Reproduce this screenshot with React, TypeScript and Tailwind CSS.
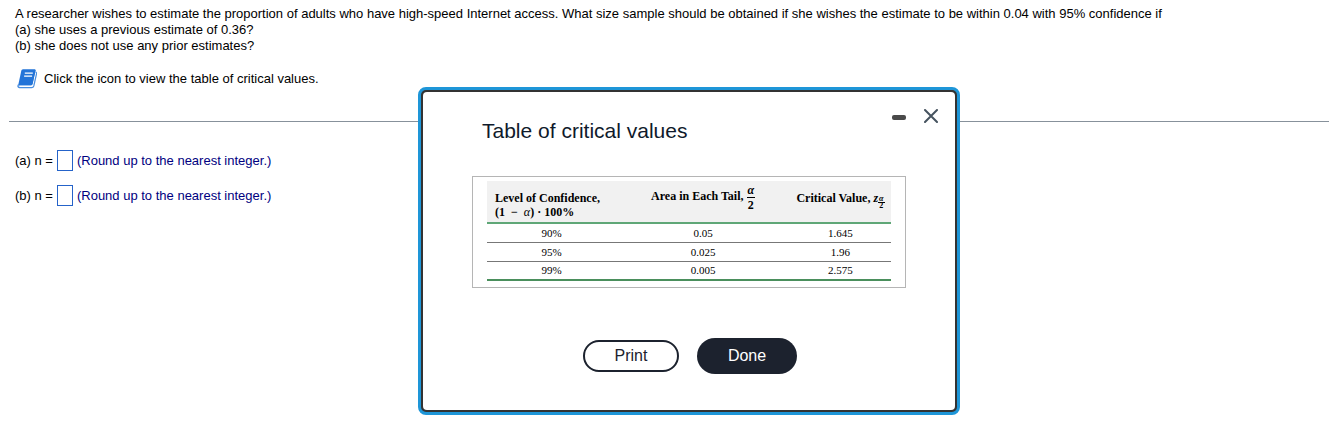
import type { ReactNode } from "react";

const parts = [
  { id: "part-a", label: "(a) n =" },
  { id: "part-b", label: "(b) n =" },
];

const criticalValues = [
  { level: "90%", tail: "0.05", z: "1.645" },
  { level: "95%", tail: "0.025", z: "1.96" },
  { level: "99%", tail: "0.005", z: "2.575" },
];

function BookIcon() {
  return (
    <svg viewBox="0 0 20 20" className="h-5 w-5" aria-hidden="true">
      <path
        d="M5.800.5h11.700c.8 0 1.300.5 1.100 1.200l-3 13.300c-.2.900-.8 1.300-1.600 1.300H2.500c-.8 0-1.300.4-1.300.9s.3.800.9.800"
        fill="#2374d8"
      />
      <path
        d="M4.300 1.800C4.500.9 5 .5 5.900.5h11.500c.7 0 1.100.4 1 1.100l-2.900 13.200c-.2.900-.8 1.400-1.600 1.400H1.200Z"
        fill="#2374d8"
      />
      <path
        d="M1.500 15.500c-1 1.700-.7 3.200.8 3.200h12.300c1.200 0 1.900-.6 2.200-1.700l2.700-12c.2-.9 0-1.500-.8-2"
        fill="none"
        stroke="#4a8fe0"
        strokeWidth="1.200"
      />
      <path d="M7.800 4.200h8M7.100 7.200h8" stroke="#fff" strokeWidth="1.300" />
    </svg>
  );
}

function Fraction({ top, bottom }: { top: ReactNode; bottom: ReactNode }) {
  return (
    <span className="inline-flex flex-col items-center align-middle">
      <span className="border-b border-black px-px italic">{top}</span>
      <span>{bottom}</span>
    </span>
  );
}

function CriticalValuesTable() {
  return (
    <div className="border border-[#b5b5b5] px-3.5 pt-1 pb-1.5">
      <table className="w-full table-fixed border-collapse font-['Liberation_Serif',serif] text-[11px] leading-4 text-black">
        <colgroup>
          <col className="w-[32%]" />
          <col className="w-[43%]" />
          <col className="w-[25%]" />
        </colgroup>
        <thead className="border-b-2 border-[#5fa777] bg-[#f1f1f1] text-[12px] leading-3.5">
          <tr className="h-[42px] align-top">
            <th className="pt-2.5 pl-2 text-left whitespace-nowrap">
              Level of Confidence,
              <br />
              (1 &nbsp;−&nbsp; <i className="font-normal">α</i>) · 100%
            </th>
            <th className="pt-0.5 whitespace-nowrap">
              Area in Each Tail, <Fraction top="α" bottom="2" />
            </th>
            <th className="pt-2.5 whitespace-nowrap">
              Critical Value, <i>z</i>
              <sub className="text-[8px] leading-1.5">
                <Fraction top="α" bottom="2" />
              </sub>
            </th>
          </tr>
        </thead>
        <tbody className="border-b-2 border-[#4a8f5c] text-center">
          {criticalValues.map((row) => (
            <tr key={row.level} className="h-[19px] border-t border-[#777] first:border-t-0">
              <td>{row.level}</td>
              <td>{row.tail}</td>
              <td>{row.z}</td>
            </tr>
          ))}
        </tbody>
      </table>
    </div>
  );
}

function CriticalValuesDialog() {
  return (
    <div
      role="dialog"
      aria-labelledby="dialog-title"
      className="absolute top-[87px] left-[418px] w-[542px] rounded-lg border-3 border-[#1e96d8] bg-[#333]"
    >
      <div className="m-0.5 rounded-sm bg-white px-[49px] pt-3.5 pb-9">
        <div className="flex items-start justify-between">
          <h2 id="dialog-title" className="mt-[11px] ml-2.5 text-[21px] leading-7 text-[#0f1a2b]">
            Table of critical values
          </h2>
          <div className="-mr-8 flex items-center gap-[18px]">
            <button type="button" aria-label="Minimize" className="flex h-5 items-center">
              <span className="mt-0.5 h-[5px] w-3.5 rounded-xs bg-[#4a4a4a]" />
            </button>
            <button type="button" aria-label="Close">
              <svg viewBox="0 0 14 14" className="h-3.5 w-3.5" aria-hidden="true">
                <path
                  d="M1 1l12 12M13 1 1 13"
                  stroke="#46535f"
                  strokeWidth="2"
                  strokeLinecap="round"
                />
              </svg>
            </button>
          </div>
        </div>
        <div className="mt-[31px]">
          <CriticalValuesTable />
        </div>
        <div className="mt-[50px] flex items-center justify-center gap-[18px] pl-0.5 text-base text-[#1c222e]">
          <button type="button" className="h-8 w-24 rounded-full border-2 border-[#1c222e] bg-white">
            Print
          </button>
          <button type="button" className="h-9 w-25 rounded-full bg-[#1c222e] text-white">
            Done
          </button>
        </div>
      </div>
    </div>
  );
}

export default function App() {
  return (
    <main className="relative min-h-screen bg-white pt-1.5 font-['Liberation_Sans',Arial,sans-serif] text-[13px] leading-4 text-black">
      <section className="px-[15px]">
        <p>
          A researcher wishes to estimate the proportion of adults who have high-speed Internet
          access. What size sample should be obtained if she wishes the estimate to be within 0.04
          with 95% confidence if
          <br />
          (a) she uses a previous estimate of 0.36?
          <br />
          (b) she does not use any prior estimates?
        </p>
        <button type="button" className="mt-[15px] ml-0.5 flex items-center gap-[7px]">
          <BookIcon />
          <span>Click the icon to view the table of critical values.</span>
        </button>
      </section>
      <hr className="mt-8 ml-[9px] border-[#87919b]" />
      <form className="mt-7 flex flex-col gap-3.5 px-[15px]">
        {parts.map((part) => (
          <div key={part.id} className="flex items-center">
            <label htmlFor={part.id}>{part.label}</label>
            <input
              id={part.id}
              type="text"
              className="mx-1 h-[21px] w-4 border border-[#2563c9] text-center outline-none"
            />
            <span className="text-[#000080]">(Round up to the nearest integer.)</span>
          </div>
        ))}
      </form>
      <CriticalValuesDialog />
    </main>
  );
}
